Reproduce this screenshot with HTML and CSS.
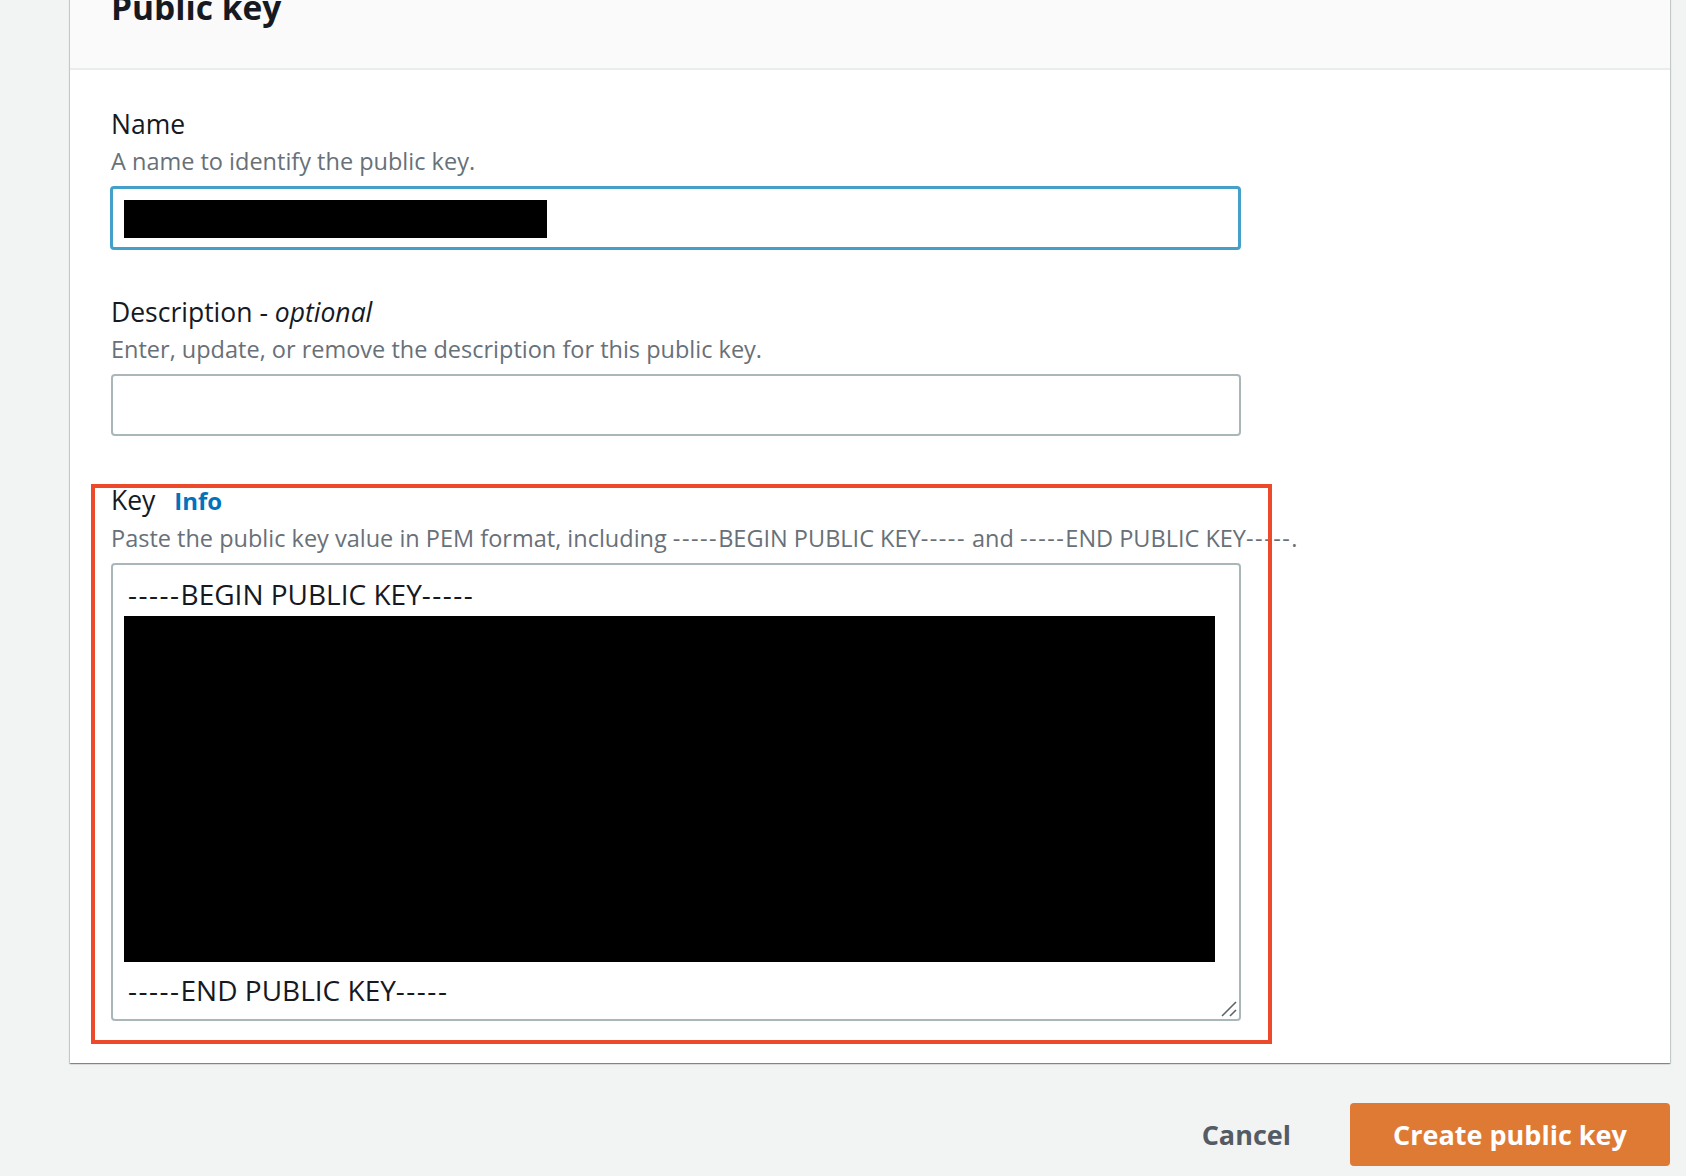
FILE: index.html
```html
<!DOCTYPE html>
<html lang="en">
<head>
    <meta charset="UTF-8">
    <meta name="viewport" content="width=device-width, initial-scale=1.0">
    <title>Create public key</title>
    <link rel="stylesheet" href="styles.css">
</head>
<body>
    <div class="page">
        <div class="card">
            <div class="card-header">
                <h2>Public key</h2>
            </div>
            <div class="card-body">
                <!-- Name -->
                <div class="field">
                    <label class="field-label">Name</label>
                    <div class="field-help">A name to identify the public key.</div>
                    <div class="input focused">
                        <span class="redact redact-name"></span>
                    </div>
                </div>

                <!-- Description -->
                <div class="field">
                    <label class="field-label">Description - <i>optional</i></label>
                    <div class="field-help">Enter, update, or remove the description for this public key.</div>
                    <div class="input"></div>
                </div>

                <!-- Key -->
                <div class="field field-key">
                    <div class="highlight"></div>
                    <label class="field-label">Key <a class="info" href="#">Info</a></label>
                    <div class="field-help">Paste the public key value in PEM format, including <span class="dash">-----</span>BEGIN PUBLIC KEY<span class="dash">-----</span> and <span class="dash">-----</span>END PUBLIC KEY<span class="dash">-----</span>.</div>
                    <div class="textarea">
                        <div class="key-line"><span class="dash">-----</span>BEGIN PUBLIC KEY<span class="dash">-----</span></div>
                        <div class="redact redact-key"></div>
                        <div class="key-line"><span class="dash">-----</span>END PUBLIC KEY<span class="dash">-----</span></div>
                        <svg class="grip" width="16" height="16" viewBox="0 0 16 16">
                            <line x1="1" y1="15" x2="15" y2="1" stroke="#5f6368" stroke-width="1.6"/>
                            <line x1="9" y1="15" x2="15" y2="9" stroke="#5f6368" stroke-width="1.6"/>
                        </svg>
                    </div>
                </div>
            </div>
        </div>

        <div class="actions">
            <button class="btn-link">Cancel</button>
            <button class="btn-primary">Create public key</button>
        </div>
    </div>
</body>
</html>
```

FILE: styles.css
```css
body { margin: 0; background: #f2f3f3; font-family: "Open Sans", "Liberation Sans", sans-serif; color: #16191f; overflow: hidden; }
.page { padding: 0 16px 0 70px; }
.card { background: #fff; margin-top: -30px; box-shadow: 0 1px 1px 0 rgba(0,28,36,.3), 1px 1px 1px 0 rgba(0,28,36,.15), -1px 1px 1px 0 rgba(0,28,36,.15); }
.card-header { background: #fafafa; padding: 17px 40px 41px 41px; border-bottom: 2px solid #eaeded; }
.card-header h2 { margin: 0; font-size: 33.5px; line-height: 40px; font-weight: 700; }
.card-body { padding: 36px 40px 42px 41px; }

.field { width: 1130px; margin-bottom: 44px; }
.field:last-child { margin-bottom: 0; }
.field-label { display: block; font-size: 26.5px; line-height: 36px; }
.field-label i { font-style: italic; }
.field-help { margin-top: 2px; font-size: 23.5px; line-height: 34px; color: #687078; white-space: nowrap; }
.dash { letter-spacing: 1.5px; }

.input { margin-top: 8px; height: 58px; border: 2px solid #aab7b8; border-radius: 4px; }
.input.focused { margin-left: -1px; height: 58px; border: 3px solid #44a0c8; display: flex; align-items: center; padding-left: 11px; }
.redact { display: block; background: #000; }
.redact-name { width: 423px; height: 38px; margin-top: 2px; }

.field-key { position: relative; margin-top: 46px; }
.highlight { position: absolute; left: -20px; top: 2px; width: 1173px; height: 552px; border: 4px solid #ec4a2a; pointer-events: none; }
.info { color: #0073bb; font-weight: 700; font-size: 24px; text-decoration: none; margin-left: 12px; }

.textarea { position: relative; margin-top: 8px; height: 433px; border: 2px solid #aab7b8; border-radius: 4px; padding: 11px 0 10px 11px; }
.key-line { font-size: 28px; line-height: 36px; padding-left: 4px; }
.redact-key { width: 1091px; height: 346px; margin: 4px 0 10px; }
.grip { position: absolute; right: 2px; bottom: 2px; }

.actions { display: flex; justify-content: flex-end; align-items: center; margin-top: 40px; }
.btn-link { background: none; border: none; font-family: inherit; font-size: 27px; font-weight: 700; color: #545b64; padding: 0 20px; margin-right: 39px; cursor: pointer; }
.btn-primary { background: #df7a35; color: #fff; border: none; border-radius: 4px; width: 320px; height: 63px; font-family: inherit; font-size: 27px; font-weight: 700; cursor: pointer; }
```
